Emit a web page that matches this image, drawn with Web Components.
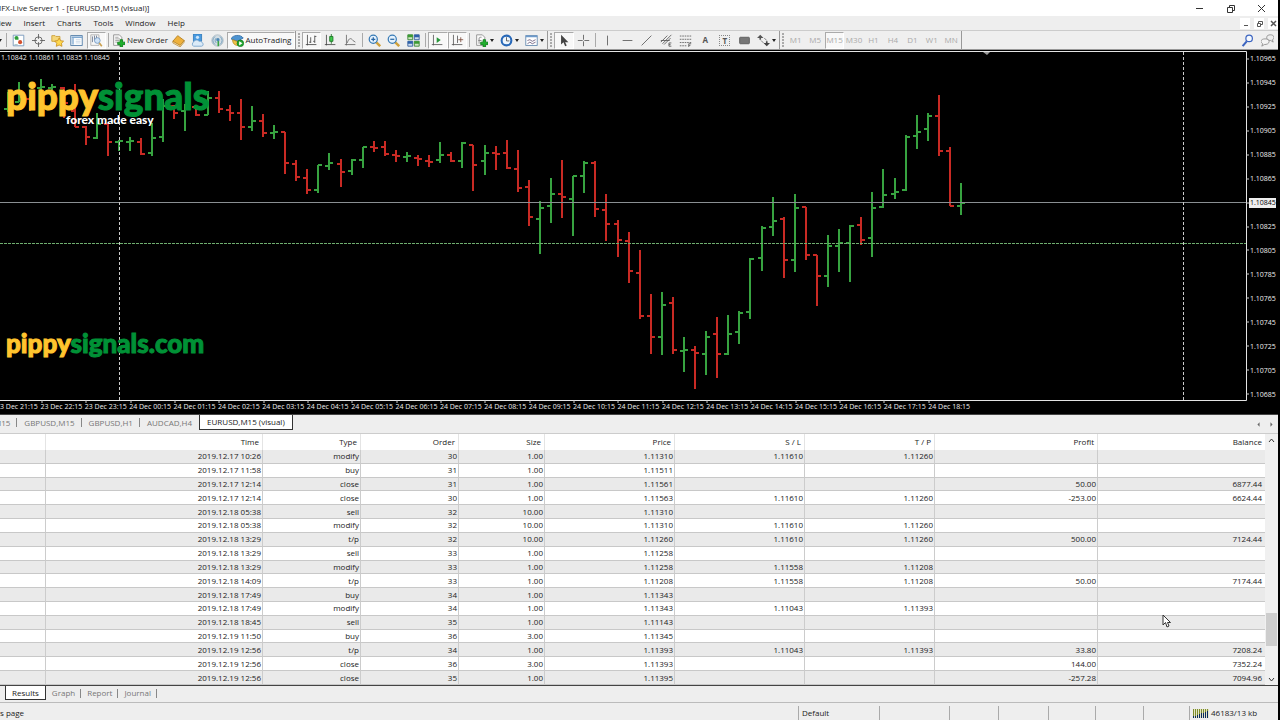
<!DOCTYPE html>
<html lang="en">
<head>
<meta charset="utf-8">
<title>MFX-Live Server 1 - [EURUSD,M15 (visual)]</title>
<style>
  body {
    margin: 0;
    background: #000;
    color: #222;
    font-family: "Open Sans", "Noto Sans", sans-serif;
    font-size: 8px;
    line-height: 12px;
  }
</style>
</head>
<body>
<terminal-window></terminal-window>

<script>
const ICONS = {
  market: '<path d="M1.500 1.500h13v13h-13z" fill="#fff" stroke="#6a8fb5"/><path d="M3 5a2.500 2.500 0 0 1 5 0v2H4z" fill="#2f9e3a"/><circle cx="10" cy="10" r="2.500" fill="#d2502d"/><path d="M3 13h4" stroke="#9bb"/>',
  target: '<circle cx="8" cy="8" r="4.500" fill="none" stroke="#555"/><path d="M8 0v6M8 10v6M0 8h6M10 8h6" stroke="#555"/>',
  favorites: '<path d="M1 2h4l1 1h5v6H1z" fill="#f5d77a" stroke="#c99a2e"/><path d="M10 5l1.800 3.200 3.700.6-2.600 2.600.6 3.800-3.500-1.700-3.500 1.700.6-3.800-2.600-2.600 3.700-.6z" fill="#ffd94f" stroke="#c78d1c"/>',
  dataWindow: '<rect x="1" y="2" width="14" height="12" fill="#fff" stroke="#3f6f9f"/><path d="M2 3h13v2H2z" fill="#7fa8d0"/><path d="M2 5h3v8H2z" fill="#a8c4df"/><path d="M7 7h6M7 9h6M7 11h6" stroke="#c3d3e3"/>',
  tester: '<path d="M1 1h10v13H1z" fill="#f7f7f7" stroke="#aaa"/><path d="M3 3v7M5.500 2v6M8 2v5" stroke="#60708a"/><circle cx="9" cy="8" r="3.500" fill="#cfe3f7" stroke="#6f93bd"/><path d="M11.500 11l3 4" stroke="#caa04e" stroke-width="2"/>',
  newOrder: '<path d="M2 1h7l3 3v10H2z" fill="#fafafa" stroke="#888"/><path d="M4 4h4M4 6h6M4 8h5M4 10h3" stroke="#999"/><path d="M10 7h3v3h3v3h-3v3h-3v-3H7v-3h3z" fill="#1db02b" stroke="#0b7a17"/>',
  book: '<path d="M1 9l6-7 8 6-5 7z" fill="#eeb13d" stroke="#b17a16"/><path d="M1 9l9 5 5-6v2l-5 6-9-5z" fill="#f9e3ae" stroke="#a66f13" stroke-width=".700"/>',
  cloud: '<path d="M3 0h10v9H3z" fill="#4a9be0" stroke="#2f76b8"/><circle cx="8" cy="4" r="2" fill="#cfe6fa"/><path d="M3 15a3 3 0 0 1 0-5 4 4 0 0 1 7-1 3 3 0 0 1 4 2 2.200 2.200 0 0 1-1 4z" fill="#dcebf8" stroke="#6f9fcb"/>',
  signal: '<circle cx="8" cy="8" r="7" fill="#d3dde3" stroke="#a9b8c2"/><path d="M5 3a6 6 0 0 0 0 10M11 3a6 6 0 0 1 0 10M6.500 5a4 4 0 0 0 0 6" fill="none" stroke="#6696b8"/><path d="M8 8h2v7H8z" fill="#3aa545"/><circle cx="8.500" cy="7" r="2" fill="#4a86b4"/>',
  auto: '<path d="M0 6c2-5 12-6 15-1l-7 4z" fill="#4c93d1" stroke="#2a69a4"/><path d="M2 7c0 5 3 7 6 7l4-6-5 1z" fill="#f0c34b" stroke="#b58a1e"/><circle cx="11.500" cy="11.500" r="4" fill="#25a833" stroke="#0d7c1c"/><path d="M10 9l4 2.500-4 2.500z" fill="#fff"/>',
  bars: '<path d="M3 1v13M1 13h13M7 4v7M5 10h2M12 2v9M10 9h2M12 3h2" fill="none" stroke="#444"/>',
  candles: '<path d="M3 1v13M1 13h13" fill="none" stroke="#444"/><path d="M9 0v12" stroke="#176e20"/><path d="M7 3h4v6H7z" fill="#3fca4c" stroke="#176e20"/>',
  line: '<path d="M3 1v13M1 13h13M4 11c2-7 5-6 7-3l3 2" fill="none" stroke="#666"/>',
  zoomIn: '<path d="M9 9l6 6" stroke="#d0a13b" stroke-width="3"/><circle cx="6.500" cy="6.500" r="5" fill="#e5f2fd" stroke="#3679b5" stroke-width="1.500"/><path d="M4 6.500h5M6.500 4v5" stroke="#2565a5" stroke-width="1.500"/>',
  zoomOut: '<path d="M9 9l6 6" stroke="#d0a13b" stroke-width="3"/><circle cx="6.500" cy="6.500" r="5" fill="#e5f2fd" stroke="#3679b5" stroke-width="1.500"/><path d="M4 6.500h5" stroke="#2565a5" stroke-width="1.500"/>',
  tiles: '<path d="M1 1h6v6H1zM9 9h6v6H9z" fill="#cfe4c1" stroke="#2c7f2c"/><path d="M9 1h6v6H9zM1 9h6v6H1z" fill="#cbdcf0" stroke="#2a5596"/><path d="M1 1h6v3H1zM9 9h6v3H9z" fill="#3b9a32"/><path d="M9 1h6v3H9zM1 9h6v3H1z" fill="#2d5fa8"/>',
  scroll: '<path d="M3 1v13M1 13h13" stroke="#555"/><path d="M7 4l5 3.500L7 11z" fill="#28963a"/>',
  shift: '<path d="M3 1v13M1 13h13M8 2v9" stroke="#555"/><path d="M9 7h6M12 4v6" stroke="#7b4a3a"/>',
  indicators: '<path d="M2 1h7l3 3v10H2z" fill="#fafafa" stroke="#888"/><path d="M5 12V6c0-2 1-2 3-2M4 8h4" fill="none" stroke="#777"/><path d="M10 7h3v3h3v3h-3v3h-3v-3H7v-3h3z" fill="#1db02b" stroke="#0b7a17"/>',
  clock: '<circle cx="8" cy="8" r="6" fill="#eef6fd" stroke="#2768b8" stroke-width="2.500"/><path d="M8 4v4.500h3.500" fill="none" stroke="#444"/>',
  template: '<rect x="1" y="2" width="14" height="12" fill="#fff" stroke="#5880aa"/><path d="M1 2h14v2H1z" fill="#6d9acb"/><path d="M3 8l3-1 3 2 4-2M3 12l3-2 3 2 4-2" fill="none" stroke="#657"/>',
  cursor: '<path d="M5 1v12l3-3 2 5 2-1-2-4h4z" fill="#444"/>',
  cross: '<path d="M8 1v6M8 9v6M1 8h6M9 8h6" stroke="#555"/>',
  vline: '<path d="M8 2v12" stroke="#555"/>',
  hline: '<path d="M2 8h12" stroke="#555"/>',
  trend: '<path d="M2 14L14 2" stroke="#555"/>',
  channel: '<path d="M1 10l8-8M3 12L14 1M5 13l8-8M1 8h11" stroke="#555"/><path d="M14 11h-3v4h3M11 13h2" fill="none" stroke="#555"/>',
  fibo: '<path d="M1 2.500h14M1 6.500h14M1 10.500h14M1 14.500h9" stroke="#555" stroke-dasharray="2 1"/><path d="M12 16v-4h3M12 14h2" fill="none" stroke="#555"/>',
  shape: '<rect x="2" y="4" width="12" height="8" rx="1" fill="#777" stroke="#555"/>',
  arrows: '<path d="M4 1l4 4H5v2H3V5H0z" fill="#555"/><path d="M12 15l-4-4h3V9h2v2h3z" fill="#444"/><path d="M5 8l3 3M9 5l3 3" stroke="#666"/>',
  search: '<circle cx="10" cy="5.500" r="4" fill="#f4f9ff" stroke="#3b64c0" stroke-width="1.500"/><path d="M7 9l-5 6" stroke="#3b64c0" stroke-width="2.500"/>',
  chat: '<path d="M7 4c0-4 9-4 9 0 0 2-1 3-2 3l1 3-3-2c-3 0-5-1-5-4z" fill="#eee" stroke="#888"/><path d="M0 9c0-4 10-4 10 0 0 3-3 4-6 4l-3 2 1-3c-1-1-2-2-2-3z" fill="#f4f4f4" stroke="#888"/>'
};

class TerminalIcon extends HTMLElement {
  constructor() {
    super();
    this.attachShadow({ mode: 'open' });
  }

  connectedCallback() {
    this.shadowRoot.innerHTML = `
      <style>
        :host { display: inline-block; width: 13px; height: 13px; flex: none; }
        svg { display: block; width: 100%; height: 100%; }
      </style>
      <svg viewBox="0 0 16 16" aria-hidden="true">${ICONS[this.getAttribute('name')] || ''}</svg>
    `;
  }
}

class ToolButton extends HTMLElement {
  constructor() {
    super();
    this.attachShadow({ mode: 'open' });
  }

  connectedCallback() {
    const icon = this.getAttribute('icon');
    this.shadowRoot.innerHTML = `
      <style>
        :host { display: flex; flex: 1; min-width: 0; }
        button {
          display: flex;
          flex: 1;
          align-items: center;
          justify-content: center;
          gap: 2px;
          min-width: 0;
          height: 17px;
          padding: 0;
          border: 1px solid transparent;
          background: none;
          color: #222;
          font: inherit;
          white-space: nowrap;
        }
        :host([pressed]) button {
          border-color: #aaa #fff #fff #aaa;
          background: #f8f8f8;
        }
        :host([muted]) button { color: #aaa; }
        :host([glyph]) button { color: #555; font-weight: 700; }
        :host([boxed]) slot { display: block; outline: 1px dotted #888; line-height: 9px; padding: 0 2px; }
        .drop { border: 2px solid transparent; border-top: 3px solid #222; border-bottom: 0; }
      </style>
      <button type="button" aria-label="${this.getAttribute('label') || icon || ''}">
        ${icon ? `<terminal-icon name="${icon}"></terminal-icon>` : ''}
        <slot></slot>
        ${this.hasAttribute('drop') ? '<span class="drop"></span>' : ''}
      </button>
    `;
    if (!icon) {
      this.shadowRoot.querySelector('button').removeAttribute('aria-label');
    }
  }
}

class TitleBar extends HTMLElement {
  constructor() {
    super();
    this.attachShadow({ mode: 'open' });
    this.shadowRoot.innerHTML = `
      <style>
        :host { display: flex; justify-content: space-between; height: 16px; background: #fff; overflow: hidden; }
        h1 { margin: 0 0 0 -6px; font-size: 8px; font-weight: 400; line-height: 16px; white-space: nowrap; }
        div { display: flex; gap: 15px; padding-right: 9px; align-items: center; }
        button { width: 16px; height: 14px; padding: 0; border: 0; background: none; }
        svg { display: block; margin: auto; width: 9px; height: 9px; fill: none; stroke: #333; }
      </style>
      <h1><slot></slot></h1>
      <div>
        <button type="button" aria-label="Minimize"><svg viewBox="0 0 9 9"><path d="M1 4.500h7"/></svg></button>
        <button type="button" aria-label="Restore"><svg viewBox="0 0 9 9"><path d="M1.500 3.500h5v5h-5zM3.500 3V1.500h5v5H7"/></svg></button>
        <button type="button" aria-label="Close"><svg viewBox="0 0 9 9"><path d="M1 1l7 7M8 1L1 8"/></svg></button>
      </div>
    `;
  }
}

class MenuBar extends HTMLElement {
  constructor() {
    super();
    this.attachShadow({ mode: 'open' });
    this.shadowRoot.innerHTML = `
      <style>
        :host { display: flex; justify-content: space-between; height: 14px; background: #eee; overflow: hidden; }
        nav { display: flex; gap: 12px; margin-left: -6px; }
        button { padding: 0; border: 0; background: none; color: #222; font: inherit; line-height: 14px; }
        .child { display: flex; gap: 4px; align-items: center; }
        .child button { width: 10px; height: 11px; background: #fff; }
        svg { display: block; margin: auto; width: 7px; height: 7px; fill: none; stroke: #555; }
      </style>
      <nav>
        ${['View', 'Insert', 'Charts', 'Tools', 'Window', 'Help'].map(item => `<button type="button">${item}</button>`).join('')}
      </nav>
      <div class="child">
        <button type="button" aria-label="Minimize chart"><svg viewBox="0 0 7 7"><path d="M2 5.500h4"/></svg></button>
        <button type="button" aria-label="Restore chart"><svg viewBox="0 0 7 7"><path d="M1.500 3.500h3v3h-3zM2.500 3V1.500h4v3H5"/></svg></button>
        <button type="button" aria-label="Close chart"><svg viewBox="0 0 7 7"><path d="M1 1l5 5M6 1L1 6" stroke-width="1.500"/></svg></button>
      </div>
    `;
  }
}

class TerminalToolbar extends HTMLElement {
  constructor() {
    super();
    this.attachShadow({ mode: 'open' });
    this.shadowRoot.innerHTML = `
      <style>
        :host {
          display: flex;
          align-items: center;
          height: 20px;
          box-sizing: border-box;
          border-top: 1px solid #ccc;
          border-bottom: 1px solid #999;
          background: #efefef;
        }
        .group { display: flex; flex: none; }
        .w25 { width: 25px; }
        .w39 { width: 39px; }
        .w58 { width: 58px; }
        .w75 { width: 75px; }
        .w97 { width: 97px; }
        .w68 { width: 68px; }
        .w156 { width: 156px; }
        .w175 { width: 175px; }
        .sep { flex: none; width: 5px; height: 14px; background: linear-gradient(#aaa, #aaa) center / 1px 100% no-repeat; }
        .grip { flex: none; box-sizing: border-box; width: 7px; height: 18px; border-left: 1px solid #999; background: repeating-linear-gradient(#aaa 0 2px, #eee 2px 3px) center / 2px 14px no-repeat; }
        .edge { width: 1px; height: 18px; background: #999; }
        .tail { width: 4px; }
        .tail::before { content: ""; display: block; width: 0; border-top: 3px solid #222; border-right: 2px solid transparent; }
        .end { margin-left: auto; padding-right: 1px; }
      </style>
      <span class="tail"></span>
      <span class="sep"></span>
      <div class="group w97">
        <tool-button icon="market"></tool-button>
        <tool-button icon="target"></tool-button>
        <tool-button icon="favorites"></tool-button>
        <tool-button icon="dataWindow"></tool-button>
        <tool-button icon="tester" pressed></tool-button>
      </div>
      <span class="sep"></span>
      <div class="group w58"><tool-button icon="newOrder" label="New Order">New Order</tool-button></div>
      <div class="group w58">
        <tool-button icon="book"></tool-button>
        <tool-button icon="cloud"></tool-button>
        <tool-button icon="signal"></tool-button>
      </div>
      <div class="group w68"><tool-button icon="auto" label="AutoTrading" pressed>AutoTrading</tool-button></div>
      <span class="grip"></span>
      <div class="group w58">
        <tool-button icon="bars" pressed></tool-button>
        <tool-button icon="candles"></tool-button>
        <tool-button icon="line"></tool-button>
      </div>
      <span class="sep"></span>
      <div class="group w58">
        <tool-button icon="zoomIn"></tool-button>
        <tool-button icon="zoomOut"></tool-button>
        <tool-button icon="tiles"></tool-button>
      </div>
      <span class="sep"></span>
      <div class="group w39">
        <tool-button icon="scroll" pressed></tool-button>
        <tool-button icon="shift" pressed></tool-button>
      </div>
      <span class="sep"></span>
      <div class="group w75">
        <tool-button icon="indicators" drop></tool-button>
        <tool-button icon="clock" drop></tool-button>
        <tool-button icon="template" drop></tool-button>
      </div>
      <span class="grip"></span>
      <div class="group w39">
        <tool-button icon="cursor" pressed></tool-button>
        <tool-button icon="cross"></tool-button>
      </div>
      <span class="sep"></span>
      <div class="group w156">
        <tool-button icon="vline"></tool-button>
        <tool-button icon="hline"></tool-button>
        <tool-button icon="trend"></tool-button>
        <tool-button icon="channel"></tool-button>
        <tool-button icon="fibo"></tool-button>
        <tool-button glyph>A</tool-button>
        <tool-button glyph boxed>T</tool-button>
        <tool-button icon="shape"></tool-button>
      </div>
      <div class="group w25"><tool-button icon="arrows" drop></tool-button></div>
      <span class="grip"></span>
      <div class="group w175">
        ${['M1', 'M5', 'M15', 'M30', 'H1', 'H4', 'D1', 'W1', 'MN'].map(period =>
          `<tool-button muted ${period === 'M15' ? 'pressed' : ''}>${period}</tool-button>`).join('')}
      </div>
      <span class="edge"></span>
      <div class="group w39 end">
        <tool-button icon="search"></tool-button>
        <tool-button icon="chat"></tool-button>
      </div>
    `;
  }
}

const BARS = [
  [109, 92, 112, 95], [102, 82, 102, 97], [99, 97, 111, 100], [88, 79, 93, 87], [88, 84, 90, 87],
  [88, 87, 118, 103], [111, 84, 127, 127], [127, 126, 145, 137], [138, 113, 139, 124], [124, 124, 156, 142],
  [142, 140, 151, 141], [142, 137, 151, 141], [142, 138, 155, 154], [153, 123, 156, 138], [137, 99, 142, 106],
  [106, 105, 119, 113], [111, 104, 131, 107], [107, 106, 116, 115], [115, 91, 115, 98], [98, 91, 113, 109],
  [110, 105, 121, 113], [113, 99, 140, 127], [127, 106, 131, 121], [121, 114, 137, 133], [133, 125, 139, 132],
  [132, 132, 174, 163], [164, 160, 181, 177], [178, 169, 194, 190], [190, 165, 193, 165], [166, 153, 170, 163],
  [164, 159, 187, 172], [171, 159, 175, 160], [160, 147, 168, 147], [147, 141, 152, 148], [147, 141, 156, 154],
  [155, 150, 162, 156], [157, 152, 162, 156], [158, 155, 166, 159], [161, 155, 167, 162], [160, 142, 163, 155],
  [155, 152, 162, 161], [161, 142, 168, 143], [145, 145, 191, 165], [161, 145, 175, 153], [153, 146, 170, 154],
  [153, 140, 169, 168], [169, 150, 192, 188], [187, 180, 226, 217], [219, 201, 254, 208], [206, 178, 223, 194],
  [194, 160, 218, 197], [199, 176, 236, 176], [176, 161, 193, 163], [163, 161, 217, 209], [210, 194, 241, 224],
  [224, 220, 257, 240], [241, 232, 283, 271], [273, 250, 319, 316], [316, 294, 354, 337], [337, 292, 355, 305],
  [303, 297, 354, 350], [351, 337, 372, 350], [350, 346, 389, 353], [354, 331, 375, 337], [334, 317, 378, 354],
  [354, 315, 355, 334], [332, 311, 344, 313], [312, 258, 319, 259], [258, 226, 271, 228], [227, 197, 236, 221],
  [219, 217, 278, 260], [260, 194, 272, 208], [207, 207, 260, 255], [255, 255, 306, 276], [276, 235, 287, 246],
  [246, 229, 272, 243], [243, 225, 282, 226], [225, 217, 245, 240], [238, 192, 257, 208], [207, 169, 208, 195],
  [194, 178, 199, 192], [190, 135, 191, 137], [136, 115, 149, 132], [129, 113, 141, 116], [116, 95, 156, 151],
  [151, 147, 206, 206], [206, 183, 215, 203]
];

class PriceChart extends HTMLElement {
  constructor() {
    super();
    this.attachShadow({ mode: 'open' });
  }

  connectedCallback() {
    this.render();
  }

  drawBars() {
    const last = 961;
    return BARS.map(([open, high, low, close], i) => {
      const x = Math.round(last - (BARS.length - 1 - i) * 11.08);
      const color = close > open ? '#c92a24' : '#37a340';
      return `<path stroke="${color}" d="M${x} ${high}V${low}M${x - 4} ${open}H${x}M${x} ${close}H${x + 4}"/>`;
    }).join('');
  }

  timeLabels() {
    const labels = [];
    for (let hour = 21; hour < 43; hour++) {
      const day = hour < 24 ? 23 : 24;
      labels.push(`${day} Dec ${String(hour % 24).padStart(2, '0')}:15`);
    }
    return labels;
  }

  render() {
    const bid = '1.10845';
    const prices = [];
    for (let price = 110965; price >= 110685; price -= 20) {
      prices.push((price / 100000).toFixed(5));
    }
    const ticks = prices.map((_, i) => `M1246 ${Math.round(59 + i * 23.93)}h3`).join('');
    const hours = Array.from({ length: 21 }, (_, i) => `M${Math.round(42 + i * 44.33)} 400v3`).join('');

    this.shadowRoot.innerHTML = `
      <style>
        :host {
          display: grid;
          position: relative;
          grid-template: 353px 11px / 1fr 29px;
          background: #000;
          color: #eee;
          font-size: 7px;
          line-height: 10px;
          overflow: hidden;
        }
        svg { display: block; width: 100%; height: 353px; }
        .prices { display: flex; flex-direction: column; justify-content: space-between; padding: 4px 2px 3px 0; }
        .prices span { padding-left: 1px; }
        .prices .bid { background: #eee; color: #000; }
        .times { display: grid; grid-template-columns: repeat(28, 1fr); margin: -1px 10px 0 -4px; white-space: nowrap; }
        .over { position: absolute; white-space: nowrap; }
        .quote { top: 3px; left: 1px; }
        .logo { top: 26px; left: 6px; }
        .site { top: 278px; left: 6px; }
        .brand { color: #009136; font-family: Lato, sans-serif; font-weight: 900; -webkit-text-stroke: 1px; }
        .brand b { color: #ffc42e; font-weight: 900; }
        .logo .brand { font-size: 37px; line-height: 40px; }
        .site .brand { font-size: 26px; line-height: 30px; }
        .tagline { margin: -3px 0 0 60px; color: #fff; font-family: Lato, sans-serif; font-size: 12px; font-weight: 900; line-height: 14px; }
      </style>
      <svg viewBox="0 50 1249 353" preserveAspectRatio="none" role="img" aria-label="EURUSD M15 bar chart" fill="none">
        <g stroke-width="2">${this.drawBars()}</g>
        <path d="M0 202.500H1246" stroke="#8a8f92"/>
        <path d="M0 243.500H1246" stroke="#6fae6f" stroke-dasharray="3 1"/>
        <path d="M119.500 52V400M1183.500 52V400" stroke="#ccc" stroke-dasharray="3 2"/>
        <path d="M0 51.500H1246.500V400.500H0" stroke="#e4e4e4"/>
        <path d="${ticks}${hours}" stroke="#ccc"/>
        <path d="M983 52h7l-3 3z" fill="#999"/>
      </svg>
      <div class="prices">${prices.map(price => `<span class="${price === bid ? 'bid' : ''}">${price}</span>`).join('')}</div>
      <div class="times">${this.timeLabels().map(label => `<span>${label}</span>`).join('')}</div>
      <div class="over quote">1.10842 1.10861 1.10835 1.10845</div>
      <div class="over logo">
        <div class="brand"><b>pippy</b>signals</div>
        <div class="tagline">forex made easy</div>
      </div>
      <div class="over site"><div class="brand"><b>pippy</b>signals.com</div></div>
    `;
  }
}

class TabStrip extends HTMLElement {
  constructor() {
    super();
    this.attachShadow({ mode: 'open' });
  }

  connectedCallback() {
    const tabs = this.getAttribute('tabs').split('|');
    const active = this.getAttribute('active');
    this.shadowRoot.innerHTML = `
      <style>
        :host {
          display: flex;
          justify-content: space-between;
          box-sizing: border-box;
          border-top: 1px solid #444;
          background: #eee;
          overflow: hidden;
        }
        div { display: flex; align-items: flex-start; margin-left: var(--tab-shift, 0); }
        button {
          height: var(--tab-height, 14px);
          padding: 0 var(--tab-pad, 7px);
          border: 0;
          background: linear-gradient(#888, #888) right / 1px 9px no-repeat;
          color: #777;
          font: inherit;
        }
        .before { background: none; }
        .active { border: solid #333; border-width: 0 1px 1px; background: #fff; color: #222; }
      </style>
      <div role="tablist">
        ${tabs.map((tab, i) => `<button type="button" role="tab" class="${tab === active ? 'active' : tabs[i + 1] === active ? 'before' : ''}">${tab}</button>`).join('')}
      </div>
      <slot></slot>
    `;
  }
}

const COLUMNS = ['', 'Time', 'Type', 'Order', 'Size', 'Price', 'S / L', 'T / P', 'Profit', 'Balance'];

const RESULTS = [
  ['2019.12.17 10:26', 'modify', '30', '1.00', '1.11310', '1.11610', '1.11260', '', ''],
  ['2019.12.17 11:58', 'buy', '31', '1.00', '1.11511', '', '', '', ''],
  ['2019.12.17 12:14', 'close', '31', '1.00', '1.11561', '', '', '50.00', '6877.44'],
  ['2019.12.17 12:14', 'close', '30', '1.00', '1.11563', '1.11610', '1.11260', '-253.00', '6624.44'],
  ['2019.12.18 05:38', 'sell', '32', '10.00', '1.11310', '', '', '', ''],
  ['2019.12.18 05:38', 'modify', '32', '10.00', '1.11310', '1.11610', '1.11260', '', ''],
  ['2019.12.18 13:29', 't/p', '32', '10.00', '1.11260', '1.11610', '1.11260', '500.00', '7124.44'],
  ['2019.12.18 13:29', 'sell', '33', '1.00', '1.11258', '', '', '', ''],
  ['2019.12.18 13:29', 'modify', '33', '1.00', '1.11258', '1.11558', '1.11208', '', ''],
  ['2019.12.18 14:09', 't/p', '33', '1.00', '1.11208', '1.11558', '1.11208', '50.00', '7174.44'],
  ['2019.12.18 17:49', 'buy', '34', '1.00', '1.11343', '', '', '', ''],
  ['2019.12.18 17:49', 'modify', '34', '1.00', '1.11343', '1.11043', '1.11393', '', ''],
  ['2019.12.18 18:45', 'sell', '35', '1.00', '1.11143', '', '', '', ''],
  ['2019.12.19 11:50', 'buy', '36', '3.00', '1.11345', '', '', '', ''],
  ['2019.12.19 12:56', 't/p', '34', '1.00', '1.11393', '1.11043', '1.11393', '33.80', '7208.24'],
  ['2019.12.19 12:56', 'close', '36', '3.00', '1.11393', '', '', '144.00', '7352.24'],
  ['2019.12.19 12:56', 'close', '35', '1.00', '1.11395', '', '', '-257.28', '7094.96']
];

class ResultsTable extends HTMLElement {
  constructor() {
    super();
    this.attachShadow({ mode: 'open' });
    this.shadowRoot.innerHTML = `
      <style>
        :host { display: flex; position: relative; flex: 1; min-height: 0; border-top: 1px solid #ccc; background: #fff; }
        table { flex: 1; width: 0; table-layout: fixed; border-collapse: separate; border-spacing: 0; }
        th, td { padding: 0 1px 0 0; border-right: 1px solid #ccc; text-align: right; line-height: 12px; white-space: nowrap; }
        th { height: 16px; padding-right: 3px; border-color: #e4e4e4; font-weight: 400; }
        th:last-child, td:last-child { padding-right: 3px; border-right: 0; }
        td { border-bottom: 1px solid #c8c8c8; }
        tbody tr:nth-child(odd) { background: #eaeaea; }
        .c0 { width: 46px; }
        .c1 { width: 217px; }
        .c2, .c3 { width: 98px; }
        .c4 { width: 86px; }
        .c5, .c6, .c7 { width: 130px; }
        .c8 { width: 163px; }
        .scroll { display: flex; flex-direction: column; width: 13px; background: #f0f0f0; }
        .scroll button { height: 12px; padding: 0; border: 0; background: none; }
        .scroll svg { display: block; margin: auto; width: 7px; height: 5px; fill: none; stroke: #333; }
        .track { display: flex; flex: 1; flex-direction: column; justify-content: flex-end; padding-bottom: 27px; }
        .thumb { height: 33px; margin: 0 1px; background: #cdcdcd; }
        .pointer { position: absolute; right: 107px; bottom: 57px; width: 9px; height: 14px; }
      </style>
      <table>
        <colgroup>${COLUMNS.map((_, i) => `<col class="c${i}">`).join('')}</colgroup>
        <thead><tr>${COLUMNS.map(name => `<th scope="col">${name}</th>`).join('')}</tr></thead>
        <tbody>
          ${RESULTS.map(row => `<tr><td></td>${row.map(cell => `<td>${cell}</td>`).join('')}</tr>`).join('')}
        </tbody>
      </table>
      <div class="scroll">
        <button type="button" aria-label="Scroll up"><svg viewBox="0 0 7 5"><path d="M1 4l2.500-3L6 4"/></svg></button>
        <div class="track"><div class="thumb"></div></div>
        <button type="button" aria-label="Scroll down"><svg viewBox="0 0 7 5"><path d="M1 1l2.500 3L6 1"/></svg></button>
      </div>
      <svg class="pointer" viewBox="0 0 9 14"><path d="M1 1v10l2.500-2.500L5 13l2-1-1.500-3.500h3z" fill="#fff" stroke="#333"/></svg>
    `;
  }
}

class StatusBar extends HTMLElement {
  constructor() {
    super();
    this.attachShadow({ mode: 'open' });
    this.shadowRoot.innerHTML = `
      <style>
        :host {
          display: grid;
          grid-template-columns: 1fr 81px 70px 49px 50px 47px 48px 46px 89px;
          align-items: end;
          height: 17px;
          border-top: 1px solid #bbb;
          background: #eee;
        }
        span { display: flex; align-items: center; gap: 2px; height: 14px; padding-left: 3px; border-left: 1px solid #aaa; white-space: nowrap; }
        span:first-of-type { padding: 0; border: 0; }
        svg { width: 16px; height: 9px; }
      </style>
      <span>s page</span>
      <span>Default</span>
      <span></span><span></span><span></span><span></span><span></span><span></span>
      <span>
        <svg viewBox="0 0 16 9" aria-hidden="true">
          <path d="M0 0h16v9H0z" fill="#e4e6c8"/>
          <path d="M.5 0v9M2.500 0v9M4.500 0v9M6.500 0v9M8.500 0v9M10.500 0v9M12.500 0v9M14.500 0v9" stroke="#7d8c2b"/>
          <path d="M.5 7v2M2.500 7v2M4.500 6v3M6.500 5v4M8.500 4v5M10.500 4v5M12.500 3v6M14.500 2v7" stroke="#0a2a5e"/>
        </svg>
        46183/13 kb
      </span>
    `;
  }
}

class TerminalWindow extends HTMLElement {
  constructor() {
    super();
    this.attachShadow({ mode: 'open' });
    this.shadowRoot.innerHTML = `
      <style>
        :host { display: flex; flex-direction: column; min-height: 100vh; margin-right: 2px; background: #eee; }
        .charts { --tab-shift: -13px; --tab-height: 15px; height: 19px; }
        .reports { --tab-shift: 5px; --tab-pad: 6px; height: 17px; }
        .scroller { display: flex; gap: 4px; align-items: center; padding-right: 2px; }
        .scroller button { width: 9px; height: 10px; padding: 0; border: 0; background: none; color: #666; font: inherit; line-height: 10px; }
        .scroller svg { display: block; width: 5px; height: 5px; margin: auto; fill: #666; }
      </style>
      <title-bar>MFX-Live Server 1 - [EURUSD,M15 (visual)]</title-bar>
      <menu-bar></menu-bar>
      <terminal-toolbar></terminal-toolbar>
      <price-chart></price-chart>
      <tab-strip class="charts" tabs="M15|GBPUSD,M15|GBPUSD,H1|AUDCAD,H4|EURUSD,M15 (visual)" active="EURUSD,M15 (visual)">
        <div class="scroller">
          <button type="button" aria-label="Previous tab"><svg viewBox="0 0 7 6"><path d="M5 0v6L2 3z"/></svg></button>
          <button type="button" aria-label="Next tab"><svg viewBox="0 0 7 6"><path d="M2 0v6l3-3z"/></svg></button>
        </div>
      </tab-strip>
      <results-table></results-table>
      <tab-strip class="reports" tabs="Results|Graph|Report|Journal" active="Results"></tab-strip>
      <status-bar></status-bar>
    `;
  }
}

customElements.define('terminal-icon', TerminalIcon);
customElements.define('tool-button', ToolButton);
customElements.define('title-bar', TitleBar);
customElements.define('menu-bar', MenuBar);
customElements.define('terminal-toolbar', TerminalToolbar);
customElements.define('price-chart', PriceChart);
customElements.define('tab-strip', TabStrip);
customElements.define('results-table', ResultsTable);
customElements.define('status-bar', StatusBar);
customElements.define('terminal-window', TerminalWindow);
</script>
</body>
</html>
